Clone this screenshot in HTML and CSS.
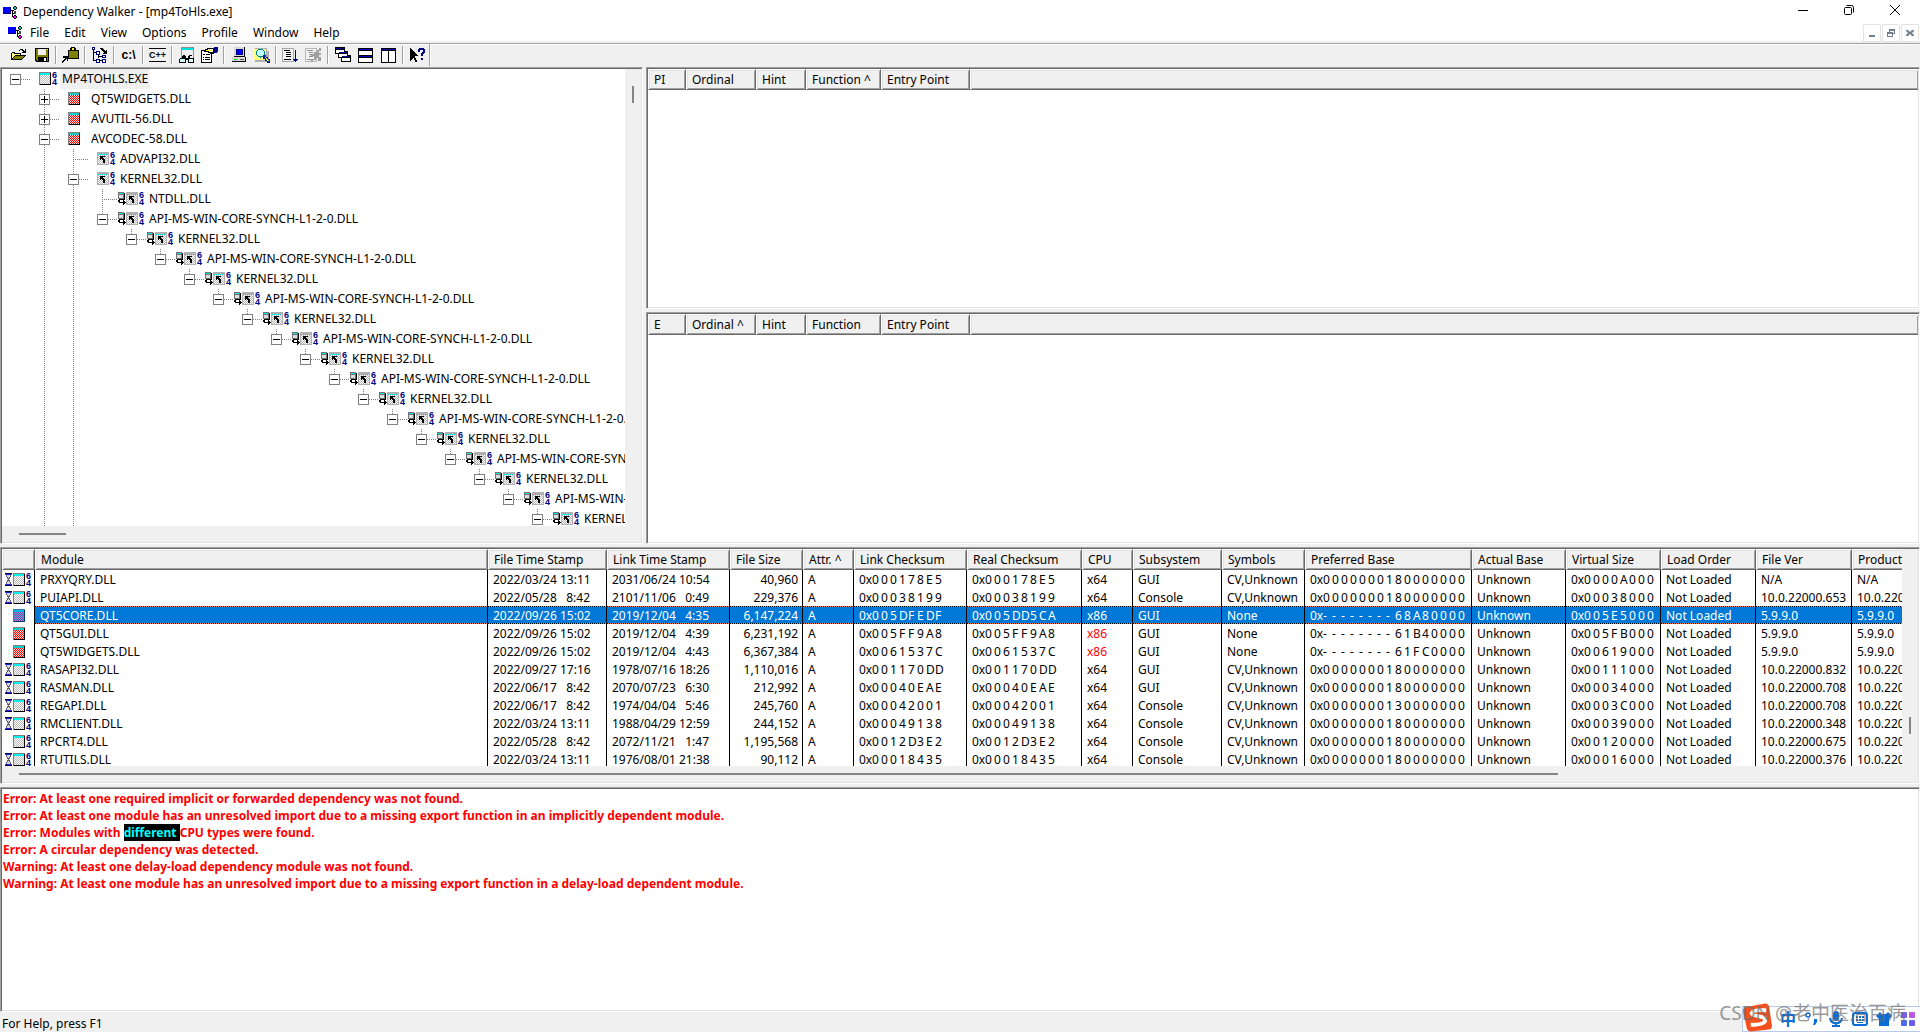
FILE: index.html
```html
<!DOCTYPE html>
<html lang="en">
<head>
  <meta charset="UTF-8">
  <meta name="viewport" content="width=device-width, initial-scale=1.0">
  <title>Dependency Walker - [mp4ToHls.exe]</title>
  <link rel="stylesheet" href="styles.css">
</head>

<body>
<svg class="sprites" aria-hidden="true">
  <defs>
    <pattern id="grayDots" width="2" height="2" patternUnits="userSpaceOnUse">
      <rect width="2" height="2" fill="#fff"/><path d="M0 0h1v1H0zM1 1h1v1H1z" fill="#b8b8b8"/>
    </pattern>
    <pattern id="redDots" width="2" height="2" patternUnits="userSpaceOnUse">
      <rect width="2" height="2" fill="#ffd8d8"/><path d="M0 0h1v1H0zM1 1h1v1H1z" fill="#f00"/>
    </pattern>
    <pattern id="blueDots" width="2" height="2" patternUnits="userSpaceOnUse">
      <rect width="2" height="2" fill="#6fa8e0"/><path d="M0 0h1v1H0zM1 1h1v1H1z" fill="#8040a0"/>
    </pattern>
    <pattern id="yellowDots" width="2" height="2" patternUnits="userSpaceOnUse">
      <rect width="2" height="2" fill="#fff"/><path d="M0 0h1v1H0zM1 1h1v1H1z" fill="#ff0"/>
    </pattern>
  </defs>

  <symbol id="app" viewBox="0 0 14 13">
    <path d="M0 1h7v7H0z" fill="#00f"/>
    <path d="M0 8h8V1h-1v6H0z" fill="#000080"/>
    <path d="M8 4h3v1H8zM9 4h1v7H9zM9 10h2v1H9zM9 7h3v1H9zM11 6h1v2h-1z" fill="#000"/>
    <path d="M11 0h2v1h1v2h-1v1h-2V3h-1V1h1z" fill="#000"/><path d="M11 1h2v2h-2z" fill="#0cc"/>
    <path d="M11 5h2v3h-2z" fill="#444"/>
    <path d="M11 9h2v1h1v2h-1v1h-2v-1h-1v-2h1z" fill="#000"/><path d="M11 10h2v2h-2z" fill="#f0f"/>
  </symbol>
  <symbol id="module" viewBox="0 0 12 13">
    <path d="M0 0h12v13H0z" fill="#808080"/>
    <path d="M11 1h1v12H1v-1h10z" fill="#000"/>
    <path d="M1 1h10v11H1z" fill="#fff"/>
    <path d="M1 3h10v9H1z" fill="url(#grayDots)"/>
    <path d="M1 1h10v2H1z" fill="#0cf0f0"/>
  </symbol>
  <symbol id="moduleRed" viewBox="0 0 12 13">
    <path d="M0 0h12v13H0z" fill="#808080"/>
    <path d="M11 1h1v12H1v-1h10z" fill="#000"/>
    <path d="M1 3h10v9H1z" fill="url(#redDots)"/>
    <path d="M1 1h10v2H1z" fill="#0cd0d0"/>
  </symbol>
  <symbol id="moduleBlue" viewBox="0 0 12 13">
    <path d="M0 0h12v13H0z" fill="#407cac"/>
    <path d="M11 1h1v12H1v-1h10z" fill="#003c6c"/>
    <path d="M1 3h10v9H1z" fill="url(#blueDots)"/>
    <path d="M1 1h10v2H1z" fill="#00b4ec"/>
  </symbol>
  <symbol id="moduleDup" viewBox="0 0 12 13">
    <path d="M0 0h12v13H0z" fill="#b0b0b0"/>
    <path d="M1 2h10v10H1z" fill="url(#grayDots)"/>
    <path d="M1 2h1v1H1zM3 2h1v1H3zM5 2h1v1H5zM7 2h1v1H7zM9 2h1v1H9z" fill="#00e0e0"/>
    <path d="M3 4h5v1H6v1h1v1h1v4H6V8H5V7H4v1H3z" fill="#000"/>
  </symbol>
  <symbol id="forward" viewBox="0 0 8 13">
    <path d="M0 0h6v7H0z" fill="#707070"/><path d="M1 1h4v1H1z" fill="#0ee"/><path d="M1 3h4v3H1z" fill="#ddd"/>
    <path d="M6 1h1v7H1V7h5zM1 8h1v2h3V8h1v1h1v1h1v1H7v1H6v1H5v-2H1v-1H0V8z" fill="#000"/>
  </symbol>
  <symbol id="hourglass" viewBox="0 0 7 13">
    <path d="M0 0h7v2H6v2H5v2H4v1h1v2h1v2h1v2H0v-2h1V9h1V7h1V6H2V4H1V2H0z" fill="#606070"/>
    <path d="M0 0h7v1H0zM0 12h7v1H0z" fill="#000040"/>
    <path d="M1 1h5v1H1zM1 11h5v1H1z" fill="#2020e0"/>
    <path d="M2 2h3v2H4v1H3V4H2zM3 8h1v1h1v2H2V9h1z" fill="#d8d8d8"/>
  </symbol>

  <symbol id="open" viewBox="0 0 16 16">
    <path d="M9 2h3v1H9zM8 3h1v1H8zM12 3h1v1h1V2h1v4h-4V5h1V4h-1z" fill="#000"/>
    <path d="M1 5h3v1h6v2h5v1h-1v1h-1v1h-1v1h-1v1H0V6h1z" fill="#000"/>
    <path d="M1 6h2v1h6v1H4v1H3v1H2v1H1z" fill="url(#yellowDots)"/>
    <path d="M5 9h8v1h-1v1h-1v1H2v-1h1v-1h1z" fill="#808000"/>
  </symbol>
  <symbol id="save" viewBox="0 0 16 16">
    <path d="M1 1h14v14H2v-1H1z" fill="#000"/><path d="M2 2h12v12H3v-1H2z" fill="#808000"/>
    <path d="M4 2h8v6H4z" fill="#f0f0f0"/><path d="M4 10h9v4H4z" fill="#000"/><path d="M10 11h2v3h-2zM13 2h1v1h-1z" fill="#f0f0f0"/>
  </symbol>
  <symbol id="search" viewBox="0 0 17 16">
    <path d="M9 0h4v1h1v2h3v9H6V3h2V1h1z" fill="#000"/><path d="M7 4h9v7H7z" fill="#808000"/><path d="M10 1h2v2h-2z" fill="#ff0"/>
    <path d="M1 9h5v5H5v-2H4v1H3v1H2v1H1v1H0v-2h1v-1h1v-1h1v-1H1z" fill="#000"/>
  </symbol>
  <symbol id="autoExpand" viewBox="0 0 16 16">
    <path d="M1 3h1v11H1zM2 5h3v1H2zM2 13h3v1H2zM6 6h1v5H6zM7 9h3v1H7zM7 13h4v1H7z" fill="#000"/>
    <path d="M0 0h3v3H0zM4 4h4v4H4zM4 12h4v4H4zM10 8h4v3h-4zM10 12h4v4h-4z" fill="#000080"/>
    <path d="M1 1h1v1H1zM5 5h2v2H5zM5 13h2v2H5zM11 9h2v1h-2zM11 13h2v2h-2z" fill="#fff"/>
    <path d="M8 1h3v1h1v1h1v1h1V3h1v4h-4V6h1V5h-1V4h-1V3H9V2H8z" fill="#000"/>
  </symbol>
  <symbol id="viewModule" viewBox="0 0 16 16">
    <path d="M2 0h13v12H2z" fill="#909090"/><path d="M3 1h11v10H3z" fill="#f0f0f0"/><path d="M3 1h11v2H3z" fill="#0dd"/>
    <path d="M4 8h2v1h1v2h2V9h1V8h3v1h-2v2h4v5H9v-3H7v3H0v-4h1v-1h2V9h1z" fill="#000"/>
    <path d="M1 12h5v3H1zM10 12h4v3h-4z" fill="#d8ffff"/>
  </symbol>
  <symbol id="properties" viewBox="0 0 17 16">
    <path d="M0 3h11v13H0z" fill="#000"/><path d="M1 4h9v11H1z" fill="#fff"/>
    <path d="M2 7h2v1H2zM5 7h4v1H5zM2 10h1v1H2zM4 10h5v1H4zM2 12h1v1H2zM4 12h5v1H4z" fill="#000"/>
    <path d="M3 3h1V2h2V1h7v6H9V6H7V5H3z" fill="#000"/><path d="M5 3h6v1H5zM7 2h5v3H8V4H7z" fill="url(#yellowDots)"/>
    <path d="M13 0h4v5h-1v1h-3z" fill="#000080"/>
  </symbol>
  <symbol id="computer" viewBox="0 0 16 16">
    <path d="M3 0h11v10H3zM1 10h14v5H1z" fill="#000"/><path d="M3 0h10v9H3zM1 10h13v4H1z" fill="#d8d8d8"/>
    <path d="M5 2h7v6H5z" fill="#000080"/><path d="M6 3h5v4H6z" fill="#00f"/><path d="M3 12h3v1H3z" fill="#0c0"/><path d="M9 12h4v1H9z" fill="#555"/>
  </symbol>
  <symbol id="find" viewBox="0 0 16 16">
    <path d="M1 1h12v3h2v11H1z" fill="#b0b0b0"/><path d="M0 2h12v11H0z" fill="url(#yellowDots)"/>
    <circle cx="7" cy="6" r="4" fill="#bff" stroke="#008080"/><path d="M10 8h2v2h2v2h2v4h-3v-2h-2v-2H9z" fill="#0020a0"/><path d="M11 10h1v1h1v1h1v1h1v1h-1z" fill="#ee0"/>
  </symbol>
  <symbol id="startProfile" viewBox="0 0 17 16">
    <path d="M0 1h12v14H0z" fill="#a8a8a8"/><path d="M1 2h10v12H1z" fill="#f4f4f4"/>
    <path d="M2 3h6v1H2zM4 5h5v1H4zM4 7h5v1H4zM4 9h5v1H4zM2 12h7v1H2z" fill="#000"/>
    <path d="M13 3h1v9h2v1h-1v1h-1v1h-1v-1h-1v-1h-1v-1h2z" fill="#000080"/>
  </symbol>
  <symbol id="stopProfile" viewBox="0 0 17 16">
    <path d="M0 1h12v14H0z" fill="#b8b8b8"/><path d="M1 2h10v12H1z" fill="#f0f0f0"/>
    <path d="M2 3h6v1H2zM4 5h4v1H4zM4 7h4v1H4zM4 9h4v1H4zM2 12h6v1H2z" fill="#909090"/>
    <path d="M14 1h2v3h-2v2h2v2h-2v2h2v4h-3v-3h-2v2H8v2H6v-3h3V9H6V7h3V5h3V3h2z" fill="#a0a0a0"/>
  </symbol>
  <symbol id="cascade" viewBox="0 0 16 16">
    <path d="M0 0h10v7H0zM3 4h10v7H3zM6 8h10v7H6z" fill="#000"/>
    <path d="M1 3h8v3H1zM4 7h8v3H4zM7 11h8v3H7z" fill="#fff"/><path d="M1 1h8v1H1zM4 5h8v1H4zM7 9h8v1H7z" fill="#0000a0"/>
  </symbol>
  <symbol id="tileHorz" viewBox="0 0 16 16">
    <path d="M0 1h15v15H0z" fill="#000"/><path d="M1 4h13v4H1zM1 11h13v4H1z" fill="#fff"/><path d="M1 2h13v1H1zM1 9h13v1H1z" fill="#0000c0"/>
  </symbol>
  <symbol id="tileVert" viewBox="0 0 16 16">
    <path d="M0 1h15v15H0z" fill="#000"/><path d="M1 4h6v11H1zM8 4h6v11H8z" fill="#fff"/><path d="M1 2h6v1H1zM8 2h6v1H8z" fill="#0000c0"/>
  </symbol>
  <symbol id="helpArrow" viewBox="0 0 16 16">
    <path d="M0 1h1v1h1v1h1v1h1v1h1v1h1v1h1v1h1v1H5v2h1v2h1v2H5v-2H4v-2H3v1H2v1H1v1H0z" fill="#000"/>
    <path d="M9 1h5v1h1v4h-1v1h-1v2h-2V6h1V5h1V3h-3v2H8V2h1zM11 11h2v2h-2z" fill="#000080"/>
  </symbol>
</svg>

<div class="window">
  <header class="titlebar">
    <svg class="appIcon"><use href="#app"/></svg>
    <span>Dependency Walker - [mp4ToHls.exe]</span>
    <div class="caption">
      <button aria-label="Minimize"><svg viewBox="0 0 10 10"><path d="M0 5.500h10"/></svg></button>
      <button aria-label="Restore"><svg viewBox="0 0 10 10"><rect x=".5" y="2.500" width="7" height="7" rx="1"/><path d="M2.500.5h5a2 2 0 0 1 2 2v5"/></svg></button>
      <button aria-label="Close"><svg viewBox="0 0 10 10"><path d="M0 0l10 10M10 0L0 10"/></svg></button>
    </div>
  </header>

  <nav class="menubar">
    <svg class="appIcon"><use href="#app"/></svg>
    <button>File</button>
    <button>Edit</button>
    <button>View</button>
    <button>Options</button>
    <button>Profile</button>
    <button>Window</button>
    <button>Help</button>
    <div class="mdi">
      <button aria-label="Minimize document"><svg viewBox="0 0 8 8"><path d="M1 6h6v2H1z"/></svg></button>
      <button aria-label="Restore document"><svg viewBox="0 0 8 8"><path d="M2 0h6v5H6V4h1V2H3v1H2zM0 3h6v5H0zm1 2v2h4V5z" fill-rule="evenodd"/></svg></button>
      <button aria-label="Close document"><svg viewBox="0 0 8 8"><path d="M0 1h2l2 2 2-2h2v1L6 4l2 2v1H6L4 5 2 7H0V6l2-2-2-2z"/></svg></button>
    </div>
  </nav>

  <div class="toolbar">
    <button aria-label="Open"><svg><use href="#open"/></svg></button>
    <button aria-label="Save"><svg><use href="#save"/></svg></button>
    <i></i>
    <button aria-label="Search path"><svg><use href="#search"/></svg></button>
    <i></i>
    <button aria-label="Auto expand"><svg><use href="#autoExpand"/></svg></button>
    <i></i>
    <button class="fullPaths">c:\</button>
    <i></i>
    <button class="undecorate"><span>C++</span></button>
    <i></i>
    <button aria-label="View module"><svg><use href="#viewModule"/></svg></button>
    <button aria-label="Properties"><svg><use href="#properties"/></svg></button>
    <i></i>
    <button aria-label="System information"><svg><use href="#computer"/></svg></button>
    <button aria-label="Find"><svg><use href="#find"/></svg></button>
    <i></i>
    <button aria-label="Start profiling"><svg><use href="#startProfile"/></svg></button>
    <button aria-label="Stop profiling"><svg><use href="#stopProfile"/></svg></button>
    <i></i>
    <button aria-label="Cascade"><svg><use href="#cascade"/></svg></button>
    <button aria-label="Tile horizontally"><svg><use href="#tileHorz"/></svg></button>
    <button aria-label="Tile vertically"><svg><use href="#tileVert"/></svg></button>
    <i></i>
    <button aria-label="Context help"><svg><use href="#helpArrow"/></svg></button>
    <i class="end"></i>
  </div>

  <main class="workspace">
    <div class="upper">
      <section class="pane scrollPane">
        <div class="view" id="tree"></div>
        <div class="vscroll treeV"><span></span></div>
        <div class="hscroll treeH"><span></span></div>
      </section>
      <div class="functions">
        <section class="pane">
          <table class="list functionList">
            <colgroup><col class="w38"><col class="w70"><col class="w50"><col class="w75"><col class="w89"><col></colgroup>
            <thead>
              <tr><th>PI</th><th>Ordinal</th><th>Hint</th><th>Function ^</th><th>Entry Point</th><th class="rest"></th></tr>
            </thead>
          </table>
        </section>
        <section class="pane">
          <table class="list functionList">
            <colgroup><col class="w38"><col class="w70"><col class="w50"><col class="w75"><col class="w89"><col></colgroup>
            <thead>
              <tr><th>E</th><th>Ordinal ^</th><th>Hint</th><th>Function</th><th>Entry Point</th><th class="rest"></th></tr>
            </thead>
          </table>
        </section>
      </div>
    </div>

    <section class="pane scrollPane">
      <div class="view">
        <table class="list moduleList">
          <colgroup>
            <col class="w33"><col class="w453"><col class="w119"><col class="w123"><col class="w73"><col class="w51">
            <col class="w113"><col class="w115"><col class="w51"><col class="w89"><col class="w83"><col class="w167">
            <col class="w94"><col class="w95"><col class="w95"><col class="w96"><col class="w96">
          </colgroup>
          <thead>
            <tr>
              <th></th><th>Module</th><th>File Time Stamp</th><th>Link Time Stamp</th><th>File Size</th><th>Attr. ^</th>
              <th>Link Checksum</th><th>Real Checksum</th><th>CPU</th><th>Subsystem</th><th>Symbols</th><th>Preferred Base</th>
              <th>Actual Base</th><th>Virtual Size</th><th>Load Order</th><th>File Ver</th><th>Product Ver</th>
            </tr>
          </thead>
          <tbody id="modules"></tbody>
        </table>
      </div>
      <div class="vscroll moduleV"><span></span></div>
      <div class="hscroll moduleH"><span></span></div>
    </section>

    <section class="pane log">
      <p>Error: At least one required implicit or forwarded dependency was not found.</p>
      <p>Error: At least one module has an unresolved import due to a missing export function in an implicitly dependent module.</p>
      <p>Error: Modules with <mark>different </mark>CPU types were found.</p>
      <p>Error: A circular dependency was detected.</p>
      <p>Warning: At least one delay-load dependency module was not found.</p>
      <p>Warning: At least one module has an unresolved import due to a missing export function in a delay-load dependent module.</p>
    </section>
  </main>

  <footer class="statusbar">For Help, press F1</footer>
</div>

<!-- input method bar floating over the window -->
<div class="ime">
  <svg class="imeLogo" viewBox="0 0 30 30"><path d="M2 5L23 1q3 0 4 3l3 20q0 3-3 4L8 30q-3 0-4-3L0 9q0-3 2-4z" fill="#f4511e"/><path d="M24 8q-14-1-15 3c0 4 14 2 14 7 0 4-7 5-15 5" fill="none" stroke="#fff" stroke-width="4"/></svg>
  <span>中</span>
  <svg viewBox="0 0 16 16"><circle cx="4" cy="4" r="2" fill="none" stroke="#0a6cd6" stroke-width="1.500"/><path d="M10 8h3v3l-2 3h-2l1-3z" fill="#0a6cd6"/></svg>
  <svg viewBox="0 0 16 16"><rect x="5" y="0" width="6" height="10" rx="3" fill="#0a6cd6"/><path d="M2 7c1 7 11 7 12 0M8 12v3M4 15h8" fill="none" stroke="#0a6cd6" stroke-width="2"/></svg>
  <svg viewBox="0 0 16 16"><rect x="1" y="2" width="14" height="12" rx="2" fill="none" stroke="#0a6cd6" stroke-width="2"/><path d="M4 5h2v2H4zM7 5h2v2H7zM10 5h2v2h-2zM4 8h2v2H4zM7 8h2v2H7zM10 8h2v2h-2zM5 11h6v1H5z" fill="#0a6cd6"/></svg>
  <svg viewBox="0 0 16 16"><path d="M4 1l2 2h4l2-2 4 4-3 3v7H3V8L0 5z" fill="#0a6cd6"/></svg>
  <svg viewBox="0 0 16 16"><rect x="1" y="1" width="6" height="6" rx="1" fill="#7a5cf0"/><rect x="9" y="1" width="6" height="6" rx="1" fill="#c056e0"/><rect x="1" y="9" width="6" height="6" rx="1" fill="#4a6cf0"/><rect x="9" y="9" width="6" height="6" rx="1" fill="#6a5cf0"/></svg>
</div>
<div class="watermark">CSDN @老中医治百病</div>

<script>
  // level, name, icon, toggle (+, - or none), has a sibling below
  const nodes = [
    [0, 'MP4TOHLS.EXE', 'exe', '-', false],
    [1, 'QT5WIDGETS.DLL', 'red', '+', true],
    [1, 'AVUTIL-56.DLL', 'red', '+', true],
    [1, 'AVCODEC-58.DLL', 'red', '-', true],
    [2, 'ADVAPI32.DLL', 'dup', '', true],
    [2, 'KERNEL32.DLL', 'dup', '-', true],
    [3, 'NTDLL.DLL', 'fwd', '', true]
  ];
  // the circular dependency repeats itself down to the bottom of the view
  for (let level = 3; level <= 18; level++) {
    const name = level % 2 ? 'API-MS-WIN-CORE-SYNCH-L1-2-0.DLL' : 'KERNEL32.DLL';
    nodes.push([level, name, 'fwd', '-', false]);
  }

  const parts = {
    exe: ['', 'module', true],
    mod: ['', 'module', true],
    delay: ['hourglass', 'module', true],
    red: ['', 'moduleRed', false],
    blue: ['', 'moduleBlue', false],
    dup: ['', 'moduleDup', true],
    fwd: ['forward', 'moduleDup', true]
  };

  function icon(kind) {
    const [left, box, is64] = parts[kind];
    let svg = '<svg class="nodeIcon" viewBox="0 0 28 14">';
    if (left) svg += `<use href="#${left}" width="${left === 'forward' ? 8 : 7}" height="13"/>`;
    svg += `<use href="#${box}" x="8" width="12" height="13"/>`;
    if (is64) svg += '<text x="21" y="6">6</text><text x="21" y="13">4</text>';
    return svg + '</svg>';
  }

  function branch(level, toggle, more) {
    let d = 'M13 10.500H29';
    if (level > 0) d += 'M13.500 0V' + (more ? 20 : 10);
    let svg = `<svg viewBox="0 0 29 20"><path class="dots" d="${d}"/>`;
    if (toggle) {
      svg += '<rect class="box" x="8.500" y="5.500" width="10" height="10"/><path class="sign" d="M10 10.500h7"/>';
      if (toggle === '+') svg += '<path class="sign" d="M13.500 7v7"/>';
      return `<button class="branch" aria-label="${toggle === '+' ? 'Expand' : 'Collapse'}">${svg}</svg></button>`;
    }
    return `<span class="branch">${svg}</svg></span>`;
  }

  document.getElementById('tree').innerHTML = nodes.map(([level, name, kind, toggle, more], i) => {
    let guides = '';
    for (let g = 0; g < level; g++) {
      const line = g === 1 || g === 2;
      guides += `<span class="branch"><svg viewBox="0 0 29 20">${line ? '<path class="dots" d="M13.500 0V20"/>' : ''}</svg></span>`;
    }
    return `<div class="node${i === 0 ? ' current' : ''}">${guides}${branch(level, toggle, more)}${icon(kind)}<span class="name">${name}</span></div>`;
  }).join('');

  const modules = [
    ['delay', 'PRXYQRY.DLL', '2022/03/24 13:11', '2031/06/24 10:54', '40,960', 'A', '0x000178E5', '0x000178E5', 'x64', 'GUI', 'CV,Unknown', '0x0000000180000000', 'Unknown', '0x0000A000', 'Not Loaded', 'N/A', 'N/A'],
    ['delay', 'PUIAPI.DLL', '2022/05/28   8:42', '2101/11/06   0:49', '229,376', 'A', '0x00038199', '0x00038199', 'x64', 'Console', 'CV,Unknown', '0x0000000180000000', 'Unknown', '0x00038000', 'Not Loaded', '10.0.22000.653', '10.0.22000.653'],
    ['blue', 'QT5CORE.DLL', '2022/09/26 15:02', '2019/12/04   4:35', '6,147,224', 'A', '0x005DFEDF', '0x005DD5CA', 'x86', 'GUI', 'None', '0x--------68A80000', 'Unknown', '0x005E5000', 'Not Loaded', '5.9.9.0', '5.9.9.0'],
    ['red', 'QT5GUI.DLL', '2022/09/26 15:02', '2019/12/04   4:39', '6,231,192', 'A', '0x005FF9A8', '0x005FF9A8', 'x86', 'GUI', 'None', '0x--------61B40000', 'Unknown', '0x005FB000', 'Not Loaded', '5.9.9.0', '5.9.9.0'],
    ['red', 'QT5WIDGETS.DLL', '2022/09/26 15:02', '2019/12/04   4:43', '6,367,384', 'A', '0x0061537C', '0x0061537C', 'x86', 'GUI', 'None', '0x--------61FC0000', 'Unknown', '0x00619000', 'Not Loaded', '5.9.9.0', '5.9.9.0'],
    ['delay', 'RASAPI32.DLL', '2022/09/27 17:16', '1978/07/16 18:26', '1,110,016', 'A', '0x001170DD', '0x001170DD', 'x64', 'GUI', 'CV,Unknown', '0x0000000180000000', 'Unknown', '0x00111000', 'Not Loaded', '10.0.22000.832', '10.0.22000.832'],
    ['delay', 'RASMAN.DLL', '2022/06/17   8:42', '2070/07/23   6:30', '212,992', 'A', '0x00040EAE', '0x00040EAE', 'x64', 'GUI', 'CV,Unknown', '0x0000000180000000', 'Unknown', '0x00034000', 'Not Loaded', '10.0.22000.708', '10.0.22000.708'],
    ['delay', 'REGAPI.DLL', '2022/06/17   8:42', '1974/04/04   5:46', '245,760', 'A', '0x00042001', '0x00042001', 'x64', 'Console', 'CV,Unknown', '0x0000000130000000', 'Unknown', '0x0003C000', 'Not Loaded', '10.0.22000.708', '10.0.22000.708'],
    ['delay', 'RMCLIENT.DLL', '2022/03/24 13:11', '1988/04/29 12:59', '244,152', 'A', '0x00049138', '0x00049138', 'x64', 'Console', 'CV,Unknown', '0x0000000180000000', 'Unknown', '0x00039000', 'Not Loaded', '10.0.22000.348', '10.0.22000.348'],
    ['mod', 'RPCRT4.DLL', '2022/05/28   8:42', '2072/11/21   1:47', '1,195,568', 'A', '0x0012D3E2', '0x0012D3E2', 'x64', 'Console', 'CV,Unknown', '0x0000000180000000', 'Unknown', '0x00120000', 'Not Loaded', '10.0.22000.675', '10.0.22000.675'],
    ['delay', 'RTUTILS.DLL', '2022/03/24 13:11', '1976/08/01 21:38', '90,112', 'A', '0x00018435', '0x00018435', 'x64', 'Console', 'CV,Unknown', '0x0000000180000000', 'Unknown', '0x00016000', 'Not Loaded', '10.0.22000.376', '10.0.22000.376']
  ];

  // hex digits sit in equal cells so that the columns line up
  function hex(value) {
    return '<span class="prefix">0x</span>' + value.slice(2).split('').map(c => `<span class="digit">${c}</span>`).join('');
  }

  document.getElementById('modules').innerHTML = modules.map(row => {
    const cells = row.map((value, i) => {
      if (i === 0) return `<td class="iconCell">${icon(value)}</td>`;
      if (i === 4) return `<td class="size">${value}</td>`;
      if (value === 'x86') return `<td class="mismatch">${value}</td>`;
      return `<td>${value.startsWith('0x') ? hex(value) : value}</td>`;
    });
    return `<tr${row[0] === 'blue' ? ' class="selected"' : ''}>${cells.join('')}</tr>`;
  }).join('');
</script>

</body>
</html>
```
FILE: styles.css
```css
* {
  box-sizing: border-box;
}
body {
  margin: 0;
  font-family: "Noto Sans", "Open Sans", "Noto Sans CJK SC", sans-serif;
  font-size: 12px;
  line-height: 16px;
  color: #000;
  background: #fff;
}
button {
  margin: 0;
  padding: 0;
  border: none;
  background: none;
  font: inherit;
  color: inherit;
}
svg {
  display: block;
  flex: none;
}
.sprites {
  position: absolute;
  width: 0;
  height: 0;
}
.window {
  display: flex;
  flex-direction: column;
  height: 100vh;
  overflow: hidden;
  background: #f0f0f0;
}

/* title bar and menu */
.titlebar {
  display: flex;
  align-items: center;
  gap: 6px;
  height: 24px;
  padding-left: 3px;
  background: #fff;
}
.appIcon {
  width: 14px;
  height: 13px;
  shape-rendering: crispEdges;
}
.caption {
  display: flex;
  align-self: flex-start;
  margin-left: auto;
  padding-right: 2px;
}
.caption button {
  display: flex;
  justify-content: center;
  width: 46px;
  padding-top: 5px;
}
.caption svg {
  width: 10px;
  height: 10px;
  fill: none;
  stroke: #000;
}
.menubar {
  display: flex;
  align-items: center;
  height: 17px;
  padding-left: 8px;
  background: #fff;
}
.menubar > button {
  padding: 0 7px 0 8px;
}
.mdi {
  display: flex;
  gap: 1px;
  margin-left: auto;
  padding-right: 1px;
}
.mdi button {
  display: flex;
  align-items: center;
  justify-content: center;
  width: 18px;
  height: 18px;
  border: 1px solid #e3e3e3;
  border-radius: 1px;
}
.mdi svg {
  width: 8px;
  height: 8px;
  fill: #708090;
}

/* toolbar */
.toolbar {
  display: flex;
  align-items: center;
  height: 24px;
  margin-top: 2px;
  padding: 0 0 1px 7px;
  border-top: 1px solid #a0a0a0;
  box-shadow: inset 0 1px #fff;
}
.toolbar button {
  display: flex;
  align-items: center;
  justify-content: center;
  width: 23px;
  height: 22px;
}
.toolbar svg {
  width: 17px;
  height: 16px;
  shape-rendering: crispEdges;
}
.toolbar i {
  width: 2px;
  height: 18px;
  margin: 0 2px;
  border-left: 1px solid #a0a0a0;
  border-right: 1px solid #fff;
}
.toolbar .end {
  height: 22px;
  margin: 0;
}
.toolbar .fullPaths {
  font: bold 12px/16px "Liberation Sans", sans-serif;
}
.undecorate span {
  border-top: 1px solid #000;
  border-bottom: 1px solid #000;
  font: bold 9px/12px "Liberation Sans", sans-serif;
}

/* panes */
.workspace {
  flex: 1;
  display: grid;
  grid-template-rows: 477fr 237fr 225fr;
  grid-template-columns: minmax(0, 1fr);
  gap: 3px;
  min-height: 0;
}
.upper {
  display: grid;
  grid-template-columns: 643fr 1274fr;
  gap: 3px;
  min-height: 0;
}
.functions {
  display: grid;
  grid-template-rows: 242fr 232fr;
  gap: 3px;
}
.pane {
  min-width: 0;
  min-height: 0;
  padding: 1px;
  overflow: hidden;
  border: 1px solid #a0a0a0;
  border-right-color: #fff;
  border-bottom-color: #fff;
  box-shadow: inset 1px 1px #696969, inset -1px -1px #e3e3e3;
  background: #fff;
}
.scrollPane {
  display: grid;
  grid-template-columns: minmax(0, 1fr) 16px;
  grid-template-rows: minmax(0, 1fr) 16px;
  background: #f0f0f0;
}
.view {
  overflow: hidden;
  background: #fff;
}
.vscroll,
.hscroll {
  display: flex;
}
.vscroll span {
  width: 2px;
  height: 17px;
  margin-left: 7px;
  background: #858585;
}
.hscroll span {
  height: 2px;
  margin-top: 7px;
  margin-left: 17px;
  background: #858585;
}
.treeV {
  padding-top: 17px;
}
.treeH span {
  width: 47px;
}
.moduleV {
  align-items: flex-end;
  padding-bottom: 32px;
}
.moduleH span {
  width: 81%;
}

/* dependency tree */
.node {
  display: flex;
  align-items: center;
  height: 20px;
  white-space: nowrap;
}
.branch {
  flex: none;
  width: 29px;
  height: 20px;
}
.branch svg {
  width: 29px;
  height: 20px;
}
.dots {
  fill: none;
  stroke: #808080;
  stroke-dasharray: 1 1;
}
.box {
  fill: #fff;
  stroke: #808080;
}
.sign {
  stroke: #000;
}
.nodeIcon {
  width: 28px;
  height: 14px;
  shape-rendering: crispEdges;
}
.nodeIcon text {
  font: bold 9px "Liberation Sans", sans-serif;
  fill: #000080;
}
.name {
  margin-left: 1px;
  padding: 2px;
}
.current .name {
  background: #f0f0f0;
}

/* lists */
.list {
  table-layout: fixed;
  border-spacing: 0;
  white-space: pre;
}
.functionList {
  width: 100%;
}
.moduleList {
  width: 1946px;
}
.list th {
  height: 21px;
  padding: 0 0 0 5px;
  overflow: hidden;
  border: 1px solid #fff;
  border-right-color: #696969;
  border-bottom-color: #696969;
  box-shadow: inset 1px 1px #e3e3e3, inset -1px -1px #a0a0a0;
  background: #f0f0f0;
  font-weight: normal;
  text-align: left;
}
.list .rest {
  border-right: none;
}
.list td {
  height: 18px;
  padding: 2px 0 0 5px;
  overflow: hidden;
  border-right: 1px solid #000;
}
.list .iconCell {
  padding: 2px 0 0 3px;
}
.list .size {
  padding-right: 4px;
  text-align: right;
}
.mismatch {
  color: #f00;
}
.selected td:not(.iconCell) {
  background: repeating-linear-gradient(90deg, #000 0 1px, #ff8728 1px 2px) top / 100% 1px no-repeat,
    repeating-linear-gradient(90deg, #000 0 1px, #ff8728 1px 2px) bottom / 100% 1px no-repeat,
    #0078d7;
  color: #fff;
}
.prefix,
.digit {
  display: inline-block;
  vertical-align: top;
}
.prefix {
  width: 13px;
}
.digit {
  width: 9px;
}
.w33 { width: 33px; }
.w38 { width: 38px; }
.w50 { width: 50px; }
.w51 { width: 51px; }
.w70 { width: 70px; }
.w73 { width: 73px; }
.w75 { width: 75px; }
.w83 { width: 83px; }
.w89 { width: 89px; }
.w94 { width: 94px; }
.w95 { width: 95px; }
.w96 { width: 96px; }
.w113 { width: 113px; }
.w115 { width: 115px; }
.w119 { width: 119px; }
.w123 { width: 123px; }
.w167 { width: 167px; }
.w453 { width: 453px; }

/* log and status bar */
.log {
  padding: 2px;
  color: #f00;
  font-weight: bold;
  line-height: 17px;
}
.log p {
  margin: 0;
}
.log mark {
  display: inline-block;
  background: #000;
  color: #0ff;
  white-space: pre;
}
.statusbar {
  height: 20px;
  padding: 4px 2px 0;
}

/* overlays */
.ime {
  position: absolute;
  right: 0;
  bottom: 0;
  display: flex;
  align-items: center;
  gap: 8px;
  height: 26px;
  padding-right: 4px;
  border: 1px solid #b8cbe8;
  border-right: none;
  background: #fff;
  color: #0a6cd6;
  font-size: 16px;
  font-weight: bold;
}
.ime svg {
  width: 16px;
  height: 16px;
}
.ime .imeLogo {
  width: 29px;
  height: 30px;
  margin-bottom: 4px;
}
.watermark {
  position: absolute;
  right: 14px;
  bottom: 6px;
  font-size: 19px;
  line-height: 26px;
  color: #707070;
  opacity: 0.7;
}
```
